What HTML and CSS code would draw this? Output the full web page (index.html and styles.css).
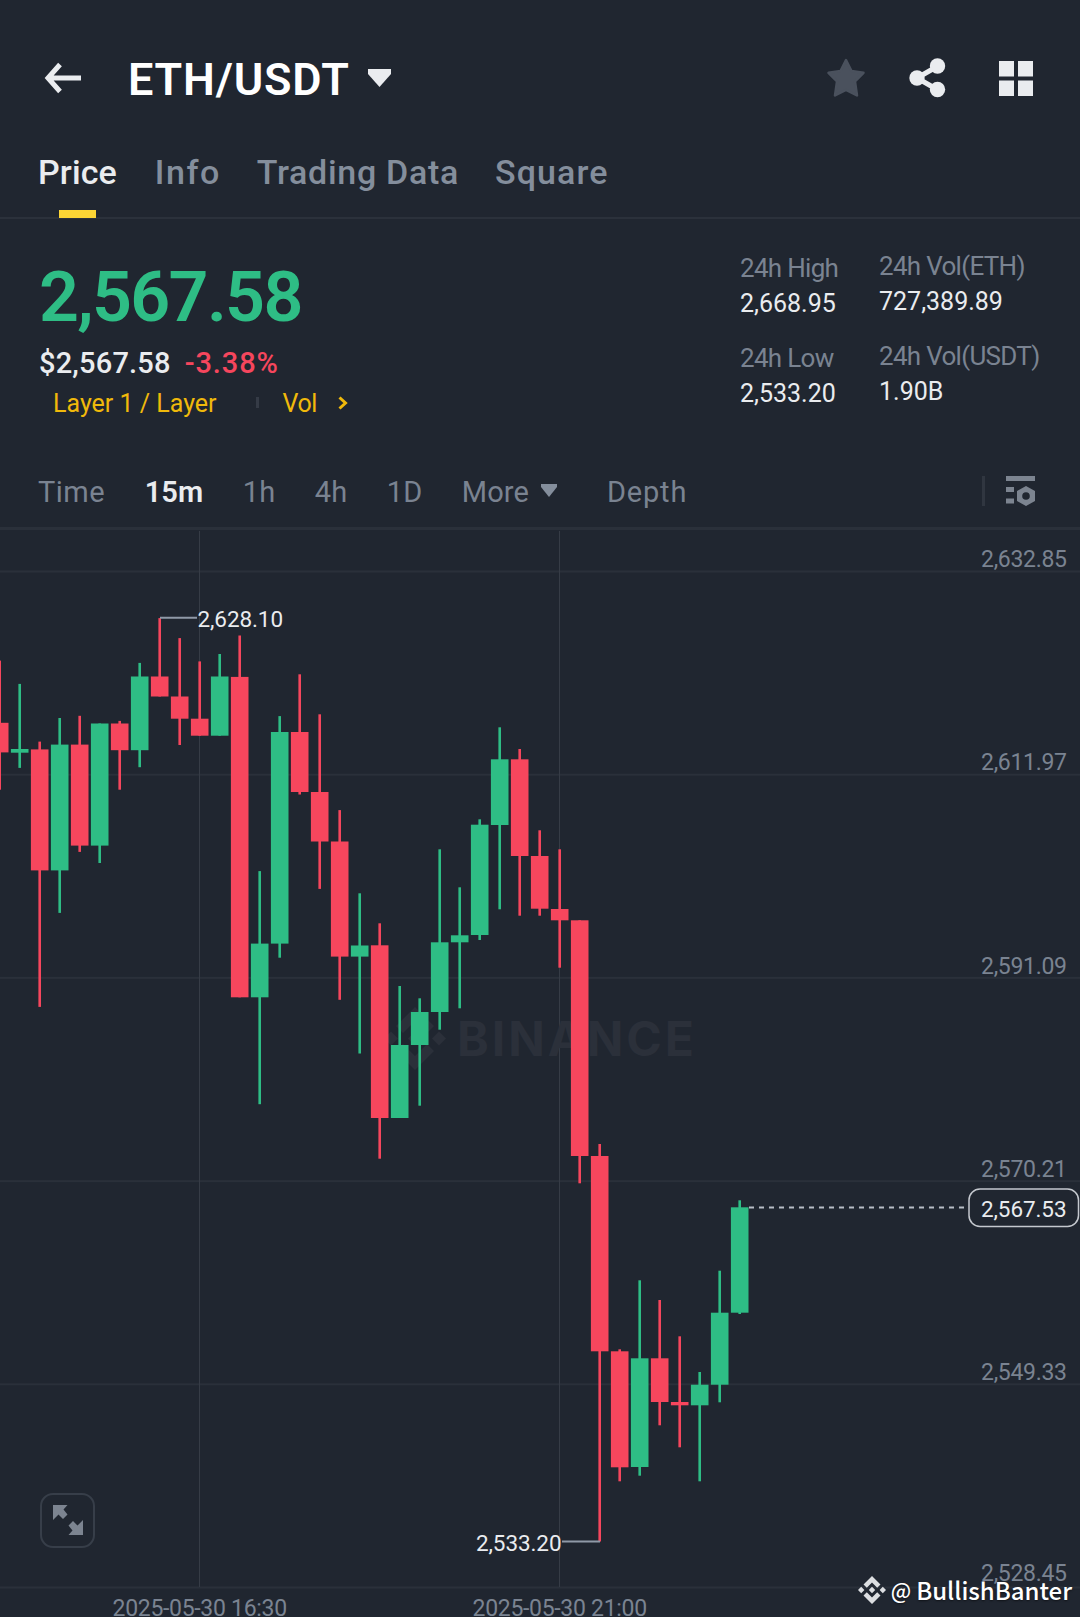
FILE: index.html
```html
<!DOCTYPE html>
<html lang="en">
<head>
  <meta charset="UTF-8" />
  <meta name="viewport" content="width=device-width, initial-scale=1.0"/>
  <title>ETH/USDT</title>
  <link rel="stylesheet" href="styles.css">
</head>
<body>
  <header class="topbar">
    <svg class="back" width="38" height="32" viewBox="0 0 38 32">
      <path d="M16 2.500 L4 16 L16 29.500 M4 16 H37" fill="none" stroke="#eaecef" stroke-width="5"/>
    </svg>
    <h1>ETH/USDT</h1>
    <svg class="caret" width="23" height="18" viewBox="0 0 23 18">
      <path d="M0 0 H23 V5 L11.500 18 L0 5 Z" fill="#eaecef"/>
    </svg>
    <div class="actions">
      <svg width="38" height="40" viewBox="0 0 38 40">
        <path d="M19 2 L24.500 13 L36.500 14.800 L28 23.500 L30 37.500 L19 32 L8 37.500 L10 23.500 L1.500 14.800 L13.500 13 Z" fill="#4a515d" stroke="#4a515d" stroke-width="2.500" stroke-linejoin="round"/>
      </svg>
      <svg class="share" width="37" height="40" viewBox="0 0 37 40">
        <path d="M29 8 L8 20 L29 32" fill="none" stroke="#eaecef" stroke-width="5"/>
        <circle cx="8" cy="20" r="7.700" fill="#eaecef"/>
        <circle cx="28.500" cy="8" r="7.700" fill="#eaecef"/>
        <circle cx="28.500" cy="31.500" r="7.700" fill="#eaecef"/>
      </svg>
      <svg width="34" height="35" viewBox="0 0 34 35">
        <path d="M0 0H15V15.500H0Z M19 0H34V15.500H19Z M0 19.500H15V35H0Z M19 19.500H34V35H19Z" fill="#eaecef"/>
      </svg>
    </div>
  </header>

  <nav class="tabs">
    <span class="active">Price</span>
    <span class="info">Info</span>
    <span>Trading Data</span>
    <span class="square">Square</span>
  </nav>

  <section class="ticker">
    <div class="quote">
      <div class="last">2,567.58</div>
      <div class="fiat"><span>$2,567.58</span><span class="down">-3.38%</span></div>
      <div class="tags">
        <span>Layer 1 / Layer</span>
        <i></i>
        <span class="vol-tag">Vol</span>
        <svg width="10" height="14" viewBox="0 0 10 14"><path d="M1.500 1.500 L7.500 7 L1.500 12.500" fill="none" stroke="#f0b90b" stroke-width="3"/></svg>
      </div>
    </div>
    <dl class="stats">
      <dt>24h High</dt>
      <dd>2,668.95</dd>
      <dt>24h Low</dt>
      <dd>2,533.20</dd>
    </dl>
    <dl class="stats vol">
      <dt>24h Vol(ETH)</dt>
      <dd>727,389.89</dd>
      <dt>24h Vol(USDT)</dt>
      <dd>1.90B</dd>
    </dl>
  </section>

  <div class="intervals">
    <span class="time">Time</span>
    <span class="active">15m</span>
    <span>1h</span>
    <span>4h</span>
    <span>1D</span>
    <span>More</span>
    <svg class="more" width="16" height="13" viewBox="0 0 16 13"><path d="M0 0 H16 V3 L8 13 L0 3 Z" fill="#848e9c"/></svg>
    <span class="depth">Depth</span>
    <div class="settings">
      <svg width="29" height="30" viewBox="0 0 29 30">
        <path d="M0 0H29V5H0Z M0 11H8V16H0Z M0 22.500H8V27.500H0Z" fill="#7c8490"/>
        <path d="M20 10 L29 15 V25 L20 30 L11 25 V15 Z M20 16.200 A3.800 3.800 0 1 0 20 23.800 A3.800 3.800 0 1 0 20 16.200 Z" fill="#7c8490" fill-rule="evenodd"/>
      </svg>
    </div>
  </div>

  <main class="chart">
    <svg id="plot" width="1080" height="1086" viewBox="0 531 1080 1086">
      <g id="grid"></g>
      <g class="watermark">
        <path d="M415 1007 L434 1026 L427 1033 L415 1021 L403 1033 L396 1026 Z M415 1070 L434 1051 L427 1044 L415 1056 L403 1044 L396 1051 Z M391 1031.500 L398 1038.500 L391 1045.500 L384 1038.500 Z M439 1031.500 L446 1038.500 L439 1045.500 L432 1038.500 Z M415 1031.500 L422 1038.500 L415 1045.500 L408 1038.500 Z"/>
        <text x="457" y="1056">BINANCE</text>
      </g>
      <g id="candles"></g>
      <g class="marks">
        <path d="M160 617.700 H197 M562 1541.500 H600"/>
        <text x="197.500" y="627">2,628.10</text>
        <text x="476" y="1550.700">2,533.20</text>
      </g>
      <path class="last-line" d="M749 1207.500 H964"/>
      <g id="labels"></g>
      <rect class="tag" x="969" y="1189" width="109.500" height="37.500" rx="11"/>
      <text class="tag-text" x="981" y="1217">2,567.53</text>
      <text class="axis" x="112.500" y="1615.500">2025-05-30 16:30</text>
      <text class="axis" x="472.500" y="1615.500">2025-05-30 21:00</text>
    </svg>
    <div class="expand">
      <svg width="32" height="32" viewBox="0 0 32 32">
        <path d="M1 1 H15.500 L11.500 5.500 L15.500 10.500 L11 15 L6.500 10.500 L1 16 Z M31 31 H16.500 L20.500 26.500 L16.500 21.500 L21 17 L25.500 21.500 L31 16 Z" fill="#7c8490"/>
      </svg>
    </div>
    <div class="author">
      <svg width="28" height="28" viewBox="0 0 28 28">
        <path d="M14 0 L22.500 8.500 L19.200 11.700 L14 6.500 L8.800 11.700 L5.500 8.500 Z M14 28 L22.500 19.500 L19.200 16.300 L14 21.500 L8.800 16.300 L5.500 19.500 Z M3.200 10.800 L6.400 14 L3.200 17.200 L0 14 Z M24.800 10.800 L28 14 L24.800 17.200 L21.600 14 Z M14 10.800 L17.200 14 L14 17.200 L10.800 14 Z" fill="#dcdee1"/>
      </svg>
      <span class="at">@</span>
      <span>BullishBanter</span>
    </div>
  </main>

  <script>
    // direction, high, body top, body bottom, low (one candle every 20px)
    const candles = [
      ["r", 660.6, 722.8, 752.4, 789.7],
      ["g", 683.9, 749.0, 752.7, 767.9],
      ["r", 741.6, 749.4, 870.4, 1006.9],
      ["g", 718.0, 744.6, 870.4, 912.9],
      ["r", 715.8, 744.6, 845.6, 851.9],
      ["g", 723.5, 723.5, 845.6, 863.0],
      ["r", 720.9, 723.5, 750.2, 789.7],
      ["g", 662.9, 676.5, 750.2, 767.2],
      ["r", 618.1, 676.5, 696.5, 696.5],
      ["r", 638.1, 696.5, 718.7, 745.0],
      ["r", 661.4, 718.7, 735.7, 735.7],
      ["g", 654.0, 676.5, 735.7, 735.7],
      ["r", 635.5, 676.9, 997.3, 997.3],
      ["g", 871.1, 943.6, 997.3, 1104.2],
      ["g", 716.1, 732.0, 943.6, 957.7],
      ["r", 674.3, 732.0, 792.0, 794.5],
      ["r", 714.3, 792.0, 841.5, 888.9],
      ["r", 810.1, 841.5, 956.6, 999.8],
      ["g", 893.3, 945.5, 956.6, 1053.5],
      ["r", 923.3, 945.3, 1118.0, 1158.7],
      ["g", 986.0, 1045.0, 1118.0, 1118.0],
      ["g", 998.3, 1012.0, 1045.0, 1105.7],
      ["g", 849.3, 942.3, 1012.0, 1029.7],
      ["g", 887.3, 935.3, 942.3, 1008.3],
      ["g", 819.3, 824.7, 935.0, 940.0],
      ["g", 727.3, 759.3, 825.0, 909.3],
      ["r", 749.0, 759.3, 856.0, 915.7],
      ["r", 830.3, 856.0, 908.7, 915.7],
      ["r", 849.3, 909.0, 920.3, 967.7],
      ["r", 920.3, 920.3, 1156.0, 1183.3],
      ["r", 1144.0, 1156.0, 1351.3, 1541.5],
      ["r", 1349.3, 1351.3, 1467.3, 1481.3],
      ["g", 1280.3, 1358.3, 1467.0, 1475.7],
      ["r", 1300.0, 1358.3, 1402.0, 1425.3],
      ["r", 1336.3, 1402.0, 1405.3, 1447.3],
      ["g", 1372.0, 1384.7, 1405.3, 1481.3],
      ["g", 1270.7, 1312.7, 1384.7, 1402.3],
      ["g", 1200.3, 1207.3, 1312.7, 1314.0]
    ];
    const prices = ["2,632.85", "2,611.97", "2,591.09", "2,570.21", "2,549.33", "2,528.45"];

    function drawGrid() {
      let lines = "";
      let labels = "";
      prices.forEach((price, i) => {
        const y = 571.5 + i * 203.2;
        const lift = i === prices.length - 1 ? 7 : 4.3;
        lines += `<rect class="row" x="0" y="${y - 1}" width="1080" height="2"/>`;
        labels += `<text class="axis" x="981" y="${y - lift}">${price}</text>`;
      });
      [199, 559].forEach(x => {
        lines += `<rect class="col" x="${x}" y="531" width="1" height="1056"/>`;
      });
      document.getElementById("grid").innerHTML = lines;
      document.getElementById("labels").innerHTML = labels;
    }

    function drawCandles() {
      document.getElementById("candles").innerHTML = candles.map(([dir, high, top, bottom, low], i) => {
        const x = i * 20 - 0.3;
        return `<g class="${dir}">
          <rect x="${x - 1.3}" y="${high}" width="2.600" height="${low - high}"/>
          <rect x="${x - 8.8}" y="${top}" width="17.600" height="${bottom - top}"/>
        </g>`;
      }).join("");
    }

    drawGrid();
    drawCandles();
  </script>
</body>
</html>
```
FILE: styles.css
```css
* {
  box-sizing: border-box;
}
body {
  margin: 0;
  width: 1080px;
  height: 1617px;
  overflow: hidden;
  background: #202630;
  color: #eaecef;
  font-family: Roboto, "Liberation Sans", sans-serif;
}
svg {
  display: block;
  flex: none;
}
.topbar {
  display: flex;
  align-items: center;
  height: 158px;
  padding: 0 47px 0 44px;
}
.back {
  margin-bottom: 2px;
}
h1 {
  margin: 0 0 0 46px;
  font-size: 45px;
  font-weight: 600;
  letter-spacing: 0.8px;
  color: #fff;
}
.caret {
  margin: 0 0 3px 18px;
}
.actions {
  display: flex;
  align-items: center;
  gap: 44px;
  margin: 0 0 2px auto;
}
.share {
  margin-right: 9px;
}
.tabs {
  display: flex;
  gap: 36px;
  height: 61px;
  padding-left: 38px;
  border-bottom: 2px solid #2b313b;
  font-size: 34px;
  font-weight: 500;
  line-height: 29px;
  letter-spacing: 0.7px;
  color: #848e9c;
}
.tabs .active {
  position: relative;
  margin-right: 2px;
  letter-spacing: 0.1px;
  color: #eaecef;
}
.tabs .active::after {
  content: "";
  position: absolute;
  left: 21px;
  top: 52px;
  width: 37px;
  height: 8px;
  background: #fcd535;
}
.tabs .info {
  letter-spacing: 1.5px;
}
.tabs .square {
  letter-spacing: 1.1px;
}
.ticker {
  display: flex;
  height: 238px;
  padding-left: 39px;
}
.quote {
  width: 701px;
  padding-top: 43px;
}
.last {
  font-size: 70px;
  font-weight: 600;
  line-height: 70px;
  letter-spacing: -1.7px;
  color: #2ebd85;
}
.fiat {
  display: flex;
  gap: 14px;
  margin-top: 13px;
  font-size: 29px;
  font-weight: 500;
  line-height: 36px;
  letter-spacing: 0.2px;
}
.down {
  letter-spacing: 0.9px;
  color: #f6465d;
}
.tags {
  display: flex;
  align-items: center;
  margin-top: 5px;
  padding-left: 14px;
  font-size: 25px;
  line-height: 36px;
  color: #f0b90b;
}
.tags i {
  width: 3px;
  height: 11px;
  margin: 0 24px 4px 39px;
  background: #353b46;
}
.vol-tag {
  letter-spacing: -0.4px;
}
.tags svg {
  margin-left: 21px;
  margin-bottom: 2px;
}
.stats {
  width: 139px;
  margin: 32px 0 0;
  line-height: 35px;
  white-space: nowrap;
}
.stats.vol {
  margin-top: 30px;
}
.stats dt {
  font-size: 26px;
  letter-spacing: -0.7px;
  color: #7a8391;
}
.stats dd {
  margin: 0 0 20px;
  font-size: 25px;
}
.intervals {
  display: flex;
  align-items: center;
  gap: 39.5px;
  height: 73px;
  margin-bottom: 1px;
  padding: 0 45px 0 38px;
  border-bottom: 3px solid #2a303a;
  font-size: 29px;
  letter-spacing: 0.1px;
  color: #7a8391;
}
.intervals .time {
  letter-spacing: 0.5px;
}
.intervals .active {
  font-weight: 600;
  color: #eaecef;
}
.intervals .more {
  margin: 0 11px 4px -28px;
}
.intervals .depth {
  letter-spacing: 0.8px;
}
.settings {
  margin: 0 0 2px auto;
  padding-left: 21px;
  border-left: 3px solid #303640;
}
.chart {
  position: relative;
  height: 1086px;
}
.row {
  fill: #2a303a;
}
.col {
  fill: #363c46;
}
.g {
  fill: #2ebd85;
}
.r {
  fill: #f6465d;
}
.watermark {
  fill: #2b303a;
  font-family: Inter, sans-serif;
  font-size: 48px;
  font-weight: 700;
  letter-spacing: 3px;
}
.axis {
  fill: #7a8391;
  font-size: 23px;
  letter-spacing: -0.3px;
}
.marks path {
  stroke: #8f99a7;
  stroke-width: 2;
}
.marks text,
.tag-text {
  fill: #eaecef;
  font-size: 22.5px;
  letter-spacing: -0.1px;
}
.last-line {
  stroke: #b7bdc6;
  stroke-width: 2;
  stroke-dasharray: 5 5;
}
.tag {
  fill: #202630;
  stroke: #c4c8ce;
  stroke-width: 1.5;
}
.expand {
  position: absolute;
  left: 40px;
  top: 962px;
  width: 55px;
  height: 55px;
  padding: 9px 10px;
  border: 2px solid #373e49;
  border-radius: 13px;
}
.author {
  position: absolute;
  right: 8px;
  bottom: 9px;
  display: flex;
  align-items: center;
  font-family: "Noto Sans CJK SC", sans-serif;
  font-size: 24px;
  font-weight: 500;
  line-height: 36px;
  color: #fff;
  text-shadow: 0 1px 2px rgba(0, 0, 0, 0.5);
}
.at {
  margin: 0 5px;
  font-size: 21px;
}
```
